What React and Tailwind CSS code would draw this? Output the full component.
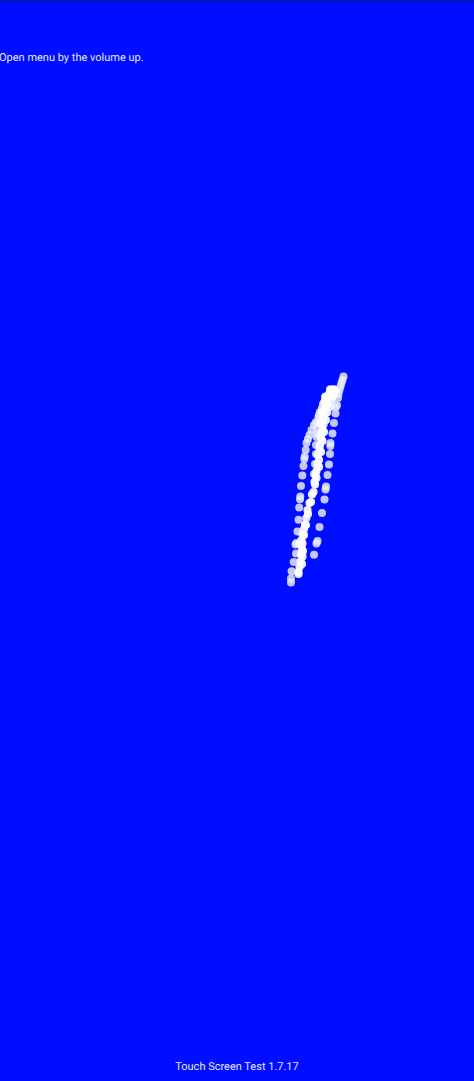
const lightTouches = [
  // right stroke
  [343.5, 376.5], [342.5, 380], [341.5, 383], [340.5, 386.5], [339.5, 390], [338.5, 394], [338, 398],
  [337, 405], [336, 407], [335.5, 413.5], [334, 423], [332.5, 433.5], [330.5, 443], [330.3, 446],
  [330, 454], [329, 464.5], [327.5, 475], [326, 486.5], [325.5, 489.5], [324.5, 499.5],
  [322, 513], [319.5, 527], [317.5, 541], [316.5, 543.5], [314, 554.8],
  // left stroke
  [325, 398], [323, 404], [322, 408], [320, 412], [318.5, 417], [316, 422], [314, 425], [311.5, 430],
  [309.5, 435], [308, 439], [306.5, 443], [305.7, 450], [304.7, 456.5], [304.3, 459], [303.5, 466],
  [302.3, 475.5], [301, 486], [300.3, 496.5], [300, 499.3], [299.2, 507.5], [298.5, 519.7],
  [297.5, 531.5], [296.5, 543], [295.5, 544.5], [296, 553.5], [293.7, 562], [291.6, 571.2],
  [291, 578.5], [291, 582.5],
  // inner strokes
  [330, 390], [333, 390], [326, 397], [325, 402], [322, 410], [319, 415], [320, 420], [317, 423],
  [317, 429], [317, 434], [316.5, 437], [316, 445], [316, 454], [315, 464], [314, 474],
];

const denseTouches = [
  [330.5, 389.3], [334, 389.3], [335.5, 391], [332, 392], [329, 394], [333, 396], [325.5, 396.5],
  [328, 399], [331.5, 400], [324.5, 402], [327.5, 404], [330, 407], [325, 409], [322.5, 412],
  [327, 412.5], [323.5, 417], [326, 420], [320.5, 423], [323.5, 424.5], [322.5, 430],
  [321.5, 434], [324, 432], [321, 438], [322.5, 441], [320, 445], [319.5, 449], [321, 452],
  [318, 455], [319, 460], [317.5, 464], [319, 467], [316.5, 471], [315.5, 475], [316.5, 478],
  [314.5, 482], [315, 484.5], [313.5, 492], [312, 494.5], [311, 502], [309.5, 503],
  [307.5, 510], [308, 514], [306.3, 518], [305, 524.5], [306, 525], [304, 529], [302.5, 534],
  [304, 535], [301.5, 540], [302.5, 543.5], [299.5, 544], [302, 549], [303, 551],
  [301, 554], [302.5, 556.5], [300.5, 561], [302, 564], [299.5, 567], [298.5, 572], [298.5, 574],
];

export default function App() {
  return (
    <main className="relative flex min-h-screen flex-col justify-between overflow-hidden border-t-2 border-[#0515ad] bg-[#000eff] font-['Roboto',sans-serif] text-[11px] leading-4 text-[#e6e8ff] [text-rendering:geometricPrecision]">
      <svg
        className="absolute inset-0 h-full w-full"
        viewBox="0 2 474 1079"
        role="img"
        aria-label="Touch trail"
      >
        <g fill="#e8ecf5" fillOpacity="0.84">
          {lightTouches.map(([x, y], i) => (
            <circle key={i} cx={x} cy={y} r="4" />
          ))}
        </g>
        <g fill="#ffffff" fillOpacity="0.92">
          {denseTouches.map(([x, y], i) => (
            <circle key={i} cx={x} cy={y} r="4.1" />
          ))}
        </g>
      </svg>
      <p className="relative -ml-px pt-12">Open menu by the volume up.</p>
      <p className="relative pb-1.5 text-center">Touch Screen Test 1.7.17</p>
    </main>
  );
}
